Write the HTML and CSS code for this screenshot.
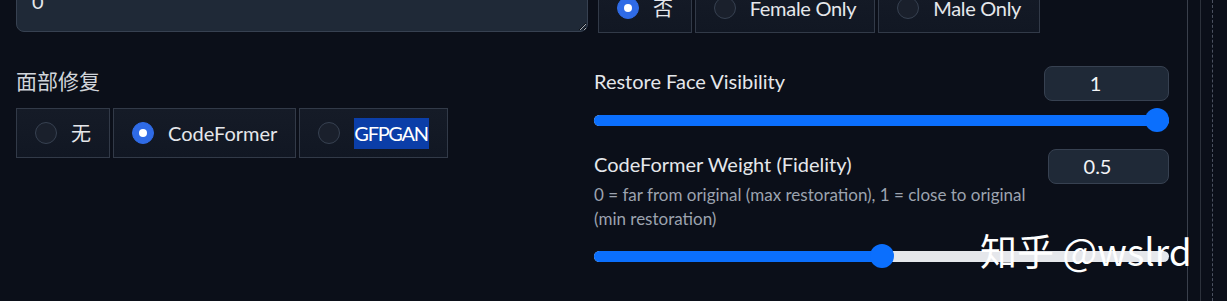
FILE: index.html
```html
<!DOCTYPE html>
<html lang="zh">
<head>
<meta charset="utf-8">
<link rel="stylesheet" href="styles.css">
</head>
<body>
<div class="page">
  <div class="main">
    <div class="row top-row">
      <div class="col left">
        <textarea class="prompt" rows="1">0</textarea>
      </div>
      <div class="col right">
        <div class="radio-group shifted">
          <label class="radio"><span class="dot checked"></span><span class="rtext">否</span></label>
          <label class="radio"><span class="dot"></span><span class="rtext">Female Only</span></label>
          <label class="radio"><span class="dot"></span><span class="rtext">Male Only</span></label>
        </div>
      </div>
    </div>

    <div class="row body-row">
      <div class="col left">
        <div class="block-label">面部修复</div>
        <div class="radio-group">
          <label class="radio"><span class="dot"></span><span class="rtext">无</span></label>
          <label class="radio"><span class="dot checked"></span><span class="rtext">CodeFormer</span></label>
          <label class="radio"><span class="dot"></span><span class="rtext"><span class="sel">GFPGAN</span></span></label>
        </div>
      </div>
      <div class="col right">
        <div class="slider-block">
          <div class="head">
            <div class="head-text">
              <div class="slabel">Restore Face Visibility</div>
            </div>
            <div class="numbox wide">1</div>
          </div>
          <div class="track-row">
            <div class="track">
              <div class="fill" style="width: 100%"></div>
              <div class="thumb" style="left: calc((100% - 24px) * 1)"></div>
            </div>
          </div>
        </div>
        <div class="slider-block second">
          <div class="head">
            <div class="head-text">
              <div class="slabel">CodeFormer Weight (Fidelity)</div>
              <div class="info">0 = far from original (max restoration), 1 = close to original (min restoration)</div>
            </div>
            <div class="numbox">0.5</div>
          </div>
          <div class="track-row tail">
            <div class="track">
              <div class="fill" style="width: calc((100% - 24px) * 0.5 + 12px)"></div>
              <div class="thumb" style="left: calc((100% - 24px) * 0.5)"></div>
            </div>
          </div>
        </div>
      </div>
    </div>
  </div>
  <div class="rail">
    <div class="vline solid"></div>
    <div class="vline solid dim"></div>
    <div class="vline dashed"></div>
  </div>
  <div class="watermark">知乎 @wslrd</div>
</div>
</body>
</html>
```

FILE: styles.css
```css
* { box-sizing: border-box; }
html, body {
  margin: 0;
  padding: 0;
  background: #0b0f19;
  overflow: hidden;
}
body {
  font-family: "Lato", "Noto Sans CJK SC", sans-serif;
  color: #e5e7eb;
  width: 1227px;
  height: 301px;
}
.page {
  position: relative;
  display: flex;
  height: 301px;
  padding-left: 16px;
}
.main {
  width: 1153px;
  display: flex;
  flex-direction: column;
}
.row {
  display: flex;
  gap: 6px;
}
.col.left { width: 572px; }
.col.right { width: 575px; }

.top-row {
  margin-top: -17px;
  height: 50px;
}
.prompt {
  display: block;
  width: 572px;
  height: 49px;
  margin: 0;
  padding: 4px 15px;
  background: #1f2937;
  border: 1px solid #374151;
  border-radius: 8px;
  color: #e5e7eb;
  font-family: "Lato", sans-serif;
  font-size: 20px;
  line-height: 26px;
  color-scheme: dark;
  resize: vertical;
  outline: none;
}

.radio-group {
  display: flex;
  gap: 3px;
}
.radio-group.shifted { margin-left: 4px; }
.radio {
  display: flex;
  align-items: center;
  gap: 14px;
  height: 50px;
  padding: 0 18px;
  border: 1px solid #323a48;
  background: linear-gradient(#151b27, #111723);
  font-size: 20px;
  color: #e5e7eb;
}
.dot {
  width: 22px;
  height: 22px;
  border-radius: 50%;
  border: 1px solid #374151;
  background: #1a202c;
  flex: none;
  position: relative;
}
.dot.checked {
  background: #2f6be6;
  border-color: #2f6be6;
}
.dot.checked::after {
  content: "";
  position: absolute;
  left: 50%;
  top: 50%;
  width: 8px;
  height: 8px;
  margin: -4px 0 0 -4px;
  border-radius: 50%;
  background: #fff;
}
.rtext { line-height: 30px; white-space: nowrap; }
.shifted .rtext { line-height: 16px; letter-spacing: -0.3px; }
.sel {
  background: #0b3ea8;
  color: #fff;
  display: inline-block;
  line-height: 31px;
  letter-spacing: -1.3px;
  padding-right: 1px;
}

.body-row { margin-top: 33px; }
.block-label {
  font-size: 21px;
  line-height: 30px;
  color: #d1d5db;
}
.left .radio-group { margin-top: 12px; }

.head {
  display: flex;
  justify-content: space-between;
  align-items: flex-start;
}
.slabel {
  font-size: 20px;
  line-height: 30px;
  color: #e5e7eb;
}
.info {
  margin-top: 4px;
  max-width: 440px;
  font-size: 17px;
  line-height: 24px;
  color: #9ca3af;
}
.numbox {
  width: 121px;
  height: 35px;
  padding-right: 22px;
  border: 1px solid #374151;
  border-radius: 8px;
  background: #1f2937;
  font-size: 20px;
  line-height: 33px;
  text-align: center;
  color: #f3f4f6;
}
.numbox.wide { width: 125px; }

.track-row {
  margin-top: 7px;
  height: 24px;
  display: flex;
  align-items: center;
}
.track-row.tail { margin-top: 13px; }
.track {
  position: relative;
  width: 100%;
  height: 11px;
  border-radius: 6px;
  background: #e5e7eb;
}
.fill {
  height: 100%;
  border-radius: 6px;
  background: #0b6ffd;
}
.thumb {
  position: absolute;
  top: 50%;
  width: 24px;
  height: 24px;
  margin-top: -12px;
  border-radius: 50%;
  background: #0b6ffd;
}
.second { margin-top: 17px; }

.rail {
  display: flex;
  margin-left: 18px;
  height: 301px;
}
.vline { width: 1px; height: 100%; }
.vline.solid { background: #3a404c; margin-right: 12px; }
.vline.solid.dim { background: #2c313b; margin-right: 11px; }
.vline.dashed {
  border-left: 1px dashed #4b5160;
}

.watermark {
  position: absolute;
  left: 980px;
  top: 225px;
  font-family: "Noto Sans CJK SC", sans-serif;
  font-size: 37px;
  line-height: 50px;
  color: #ffffff;
  white-space: nowrap;
}
```
